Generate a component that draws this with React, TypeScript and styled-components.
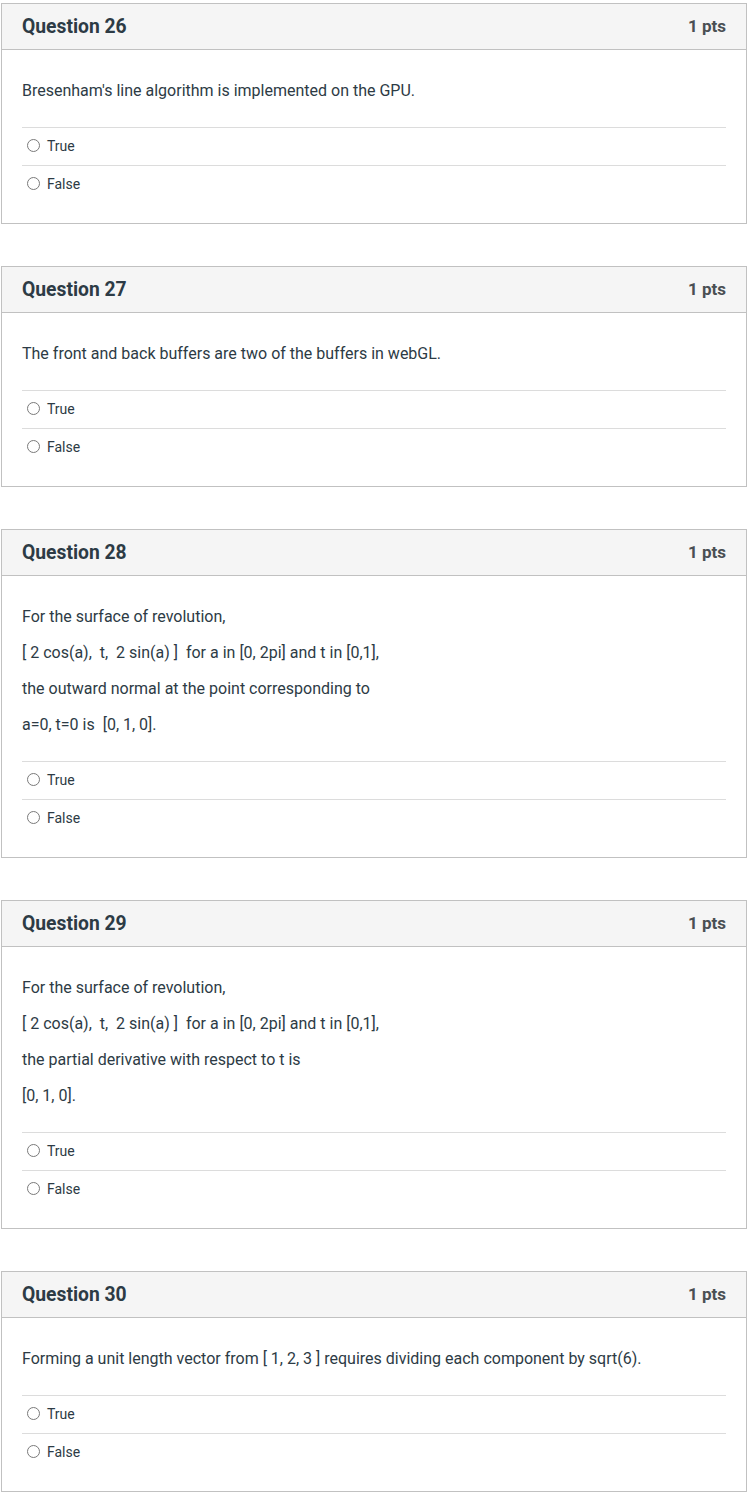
import React from "react";
import styled, { createGlobalStyle } from "styled-components";

const Global = createGlobalStyle`
  html, body { margin: 0; padding: 0; background: #ffffff; }
  body { font-family: Roboto, "Liberation Sans", Arial, sans-serif; color: #2d3b45; }
`;

const Page = styled.div`
  padding: 3px 3px 0 1px;
  display: flex;
  flex-direction: column;
  gap: 42px;
`;

const Card = styled.section`
  border: 1px solid #c1c1c1;
  background: #fff;
`;

const Header = styled.header`
  height: 46px;
  box-sizing: border-box;
  background: #f5f5f5;
  border-bottom: 1px solid #c1c1c1;
  display: flex;
  align-items: center;
  justify-content: space-between;
  padding: 0 20px;
`;

const Title = styled.h2`
  margin: 0;
  font-size: 19.3px;
  font-weight: 700;
  color: #2d3b45;
  line-height: 24px;
`;

const Points = styled.span`
  font-size: 17px;
  font-weight: 700;
  color: #4a4f53;
  padding-bottom: 1px;
`;

const Body = styled.div`
  padding: 29px 20px 20px 20px;
`;

const QuestionText = styled.div`
  display: flex;
  flex-direction: column;
  gap: 12px;
  margin-bottom: 24px;
`;

const Para = styled.p`
  margin: 0;
  font-size: 16px;
  line-height: 24px;
  color: #2d3b45;
  white-space: pre-wrap;
`;

const Answer = styled.label`
  display: flex;
  align-items: center;
  box-sizing: border-box;
  height: 38px;
  padding-bottom: 2px;
  border-top: 1px solid #dcdcdc;
  font-size: 14px;
  color: #2d3b45;
`;

const Radio = styled.span`
  box-sizing: border-box;
  width: 13px;
  height: 13px;
  border-radius: 50%;
  border: 1px solid #7a7a7a;
  background: #fff;
  margin: 0 7px 0 5px;
  flex-shrink: 0;
`;

type Q = { n: number; text: string[] };

const questions: Q[] = [
  { n: 26, text: ["Bresenham's line algorithm is implemented on the GPU."] },
  { n: 27, text: ["The front and back buffers are two of the buffers in webGL."] },
  {
    n: 28,
    text: [
      "For the surface of revolution,",
      "[ 2 cos(a),  t,  2 sin(a) ]  for a in [0, 2pi] and t in [0,1],",
      "the outward normal at the point corresponding to",
      "a=0, t=0 is  [0, 1, 0].",
    ],
  },
  {
    n: 29,
    text: [
      "For the surface of revolution,",
      "[ 2 cos(a),  t,  2 sin(a) ]  for a in [0, 2pi] and t in [0,1],",
      "the partial derivative with respect to t is",
      "[0, 1, 0].",
    ],
  },
  {
    n: 30,
    text: [
      "Forming a unit length vector from [ 1, 2, 3 ] requires dividing each component by sqrt(6).",
    ],
  },
];

export default function App() {
  return (
    <>
      <Global />
      <Page>
        {questions.map((q) => (
          <Card key={q.n}>
            <Header>
              <Title>Question {q.n}</Title>
              <Points>1 pts</Points>
            </Header>
            <Body>
              <QuestionText>
                {q.text.map((t, i) => (
                  <Para key={i}>{t}</Para>
                ))}
              </QuestionText>
              <Answer>
                <Radio />
                True
              </Answer>
              <Answer>
                <Radio />
                False
              </Answer>
            </Body>
          </Card>
        ))}
      </Page>
    </>
  );
}
